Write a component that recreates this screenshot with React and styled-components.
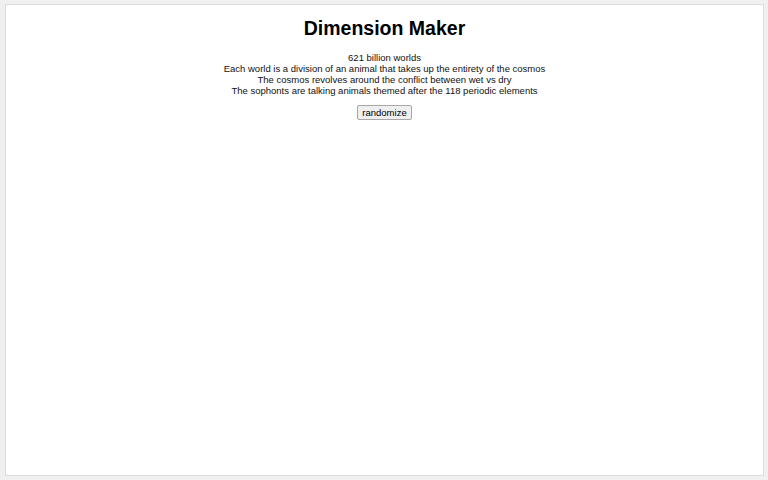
import React from 'react';
import styled, { createGlobalStyle } from 'styled-components';

const GlobalStyle = createGlobalStyle`
html, body {
  margin: 0;
  padding: 0;
  background: #f0f0f0;
  font-family: "Liberation Sans", Arial, sans-serif;
}
`

const Page = styled.div`
height: 480px;
padding: 4px 4px 4px 5px;
box-sizing: border-box;
display: flex;
`

const Card = styled.main`
flex: 1;
background: #fff;
border: 1px solid #dcdcdc;
display: flex;
flex-direction: column;
align-items: center;
color: #000;
`

const Title = styled.h1`
margin: 11px 0 0;
font-size: 19.5px;
line-height: 24px;
font-weight: bold;
`

const Blurb = styled.div`
margin-top: 12px;
font-size: 9.5px;
line-height: 11px;
text-align: center;
color: #111;
`

const Button = styled.button`
margin-top: 9px;
font-family: "Liberation Sans", Arial, sans-serif;
font-size: 9.5px;
padding: 1px 4px;
background: #efefef;
border: 1px solid #a8a8a8;
border-radius: 2px;
color: #000;
`

const lines = [
  '621 billion worlds',
  'Each world is a division of an animal that takes up the entirety of the cosmos',
  'The cosmos revolves around the conflict between wet vs dry',
  'The sophonts are talking animals themed after the 118 periodic elements',
]

export default function App() {
  return (
    <>
      <GlobalStyle />
      <Page>
        <Card>
          <Title>Dimension Maker</Title>
          <Blurb>
            {lines.map(l => <div key={l}>{l}</div>)}
          </Blurb>
          <Button type="button">randomize</Button>
        </Card>
      </Page>
    </>
  )
}
